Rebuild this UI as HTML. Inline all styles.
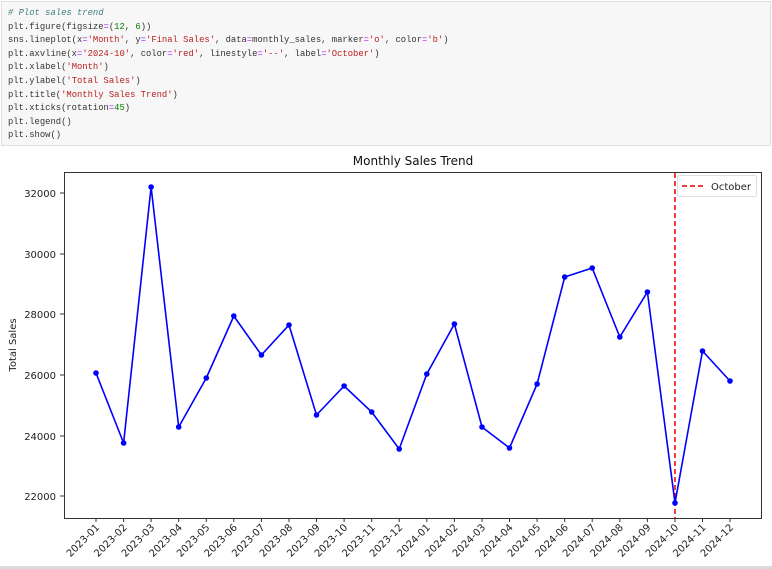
<!DOCTYPE html>
<html><head><meta charset="utf-8"><style>
html,body{margin:0;padding:0;background:#fff;width:772px;height:569px;overflow:hidden}
.code{position:absolute;left:1px;top:1px;width:768px;height:143px;background:#f7f7f7;border:1px solid #e0e0e0;}
.code pre{margin:0;position:absolute;left:6px;top:5px;font-family:"Liberation Mono",monospace;font-size:8.85px;line-height:13.6px;color:#333}
.c{color:#408080;font-style:italic}.s{color:#ba2121}.n{color:#008000}.k{color:#1a5fb4}.o{color:#aa22ff}
.bar{position:absolute;left:0;top:566px;width:772px;height:3px;background:#d8dcdf}
</style></head><body>
<div class="code"><pre><span class="c"># Plot sales trend</span>
plt.figure(figsize<span class="o">=</span>(<span class="n">12</span>, <span class="n">6</span>))
sns.lineplot(x<span class="o">=</span><span class="s">'Month'</span>, y<span class="o">=</span><span class="s">'Final Sales'</span>, data<span class="o">=</span>monthly_sales, marker<span class="o">=</span><span class="s">'o'</span>, color<span class="o">=</span><span class="s">'b'</span>)
plt.axvline(x<span class="o">=</span><span class="s">'2024-10'</span>, color<span class="o">=</span><span class="s">'red'</span>, linestyle<span class="o">=</span><span class="s">'--'</span>, label<span class="o">=</span><span class="s">'October'</span>)
plt.xlabel(<span class="s">'Month'</span>)
plt.ylabel(<span class="s">'Total Sales'</span>)
plt.title(<span class="s">'Monthly Sales Trend'</span>)
plt.xticks(rotation<span class="o">=</span><span class="n">45</span>)
plt.legend()
plt.show()</pre></div>
<svg width="772" height="569" style="position:absolute;left:0;top:0" font-family="DejaVu Sans, Liberation Sans, sans-serif">
<text x="413" y="165" font-size="12" text-anchor="middle" fill="#111">Monthly Sales Trend</text>
<rect x="64.5" y="172.5" width="697" height="346" fill="none" stroke="#333" stroke-width="1"/>
<g font-size="10" fill="#222" text-anchor="end">
<line x1="60" y1="193" x2="64" y2="193" stroke="#333"/><text x="56" y="197">32000</text>
<line x1="60" y1="254" x2="64" y2="254" stroke="#333"/><text x="56" y="258">30000</text>
<line x1="60" y1="314" x2="64" y2="314" stroke="#333"/><text x="56" y="318">28000</text>
<line x1="60" y1="375" x2="64" y2="375" stroke="#333"/><text x="56" y="379">26000</text>
<line x1="60" y1="436" x2="64" y2="436" stroke="#333"/><text x="56" y="440">24000</text>
<line x1="60" y1="496" x2="64" y2="496" stroke="#333"/><text x="56" y="500">22000</text>
</g>
<text transform="translate(16,345) rotate(-90)" font-size="10" text-anchor="middle" fill="#222">Total Sales</text>
<line x1="675" y1="173" x2="675" y2="518" stroke="#e00" stroke-width="1.5" stroke-dasharray="5,3"/>
<polyline fill="none" stroke="#0000ff" stroke-width="1.6" points="96,373 123.6,443 151.1,187 178.7,427 206.3,378 233.8,316 261.4,355 289,325 316.5,415 344.1,386 371.7,412 399.2,449 426.8,374 454.4,324 482,427 509.5,448 537.1,384 564.7,277 592.2,268 619.8,337 647.4,292 675,503 702.5,351 730,381"/>
<g fill="#0000ff">
<circle cx="96" cy="373" r="2.8"/><circle cx="123.6" cy="443" r="2.8"/><circle cx="151.1" cy="187" r="2.8"/><circle cx="178.7" cy="427" r="2.8"/><circle cx="206.3" cy="378" r="2.8"/><circle cx="233.8" cy="316" r="2.8"/><circle cx="261.4" cy="355" r="2.8"/><circle cx="289" cy="325" r="2.8"/><circle cx="316.5" cy="415" r="2.8"/><circle cx="344.1" cy="386" r="2.8"/><circle cx="371.7" cy="412" r="2.8"/><circle cx="399.2" cy="449" r="2.8"/><circle cx="426.8" cy="374" r="2.8"/><circle cx="454.4" cy="324" r="2.8"/><circle cx="482" cy="427" r="2.8"/><circle cx="509.5" cy="448" r="2.8"/><circle cx="537.1" cy="384" r="2.8"/><circle cx="564.7" cy="277" r="2.8"/><circle cx="592.2" cy="268" r="2.8"/><circle cx="619.8" cy="337" r="2.8"/><circle cx="647.4" cy="292" r="2.8"/><circle cx="675" cy="503" r="2.8"/><circle cx="702.5" cy="351" r="2.8"/><circle cx="730" cy="381" r="2.8"/>
</g>
<rect x="677.5" y="175.5" width="79" height="21" rx="2" fill="#fff" fill-opacity="0.85" stroke="#ddd"/>
<line x1="682" y1="186" x2="704" y2="186" stroke="#e00" stroke-width="1.5" stroke-dasharray="5,3"/>
<text x="711" y="190" font-size="10" fill="#222">October</text>
<g font-size="10" fill="#222" text-anchor="end" stroke="none">
<g id="t"></g>
</g>
<g stroke="#333">
<line x1="96" y1="518" x2="96" y2="522"/><line x1="123.6" y1="518" x2="123.6" y2="522"/><line x1="151.1" y1="518" x2="151.1" y2="522"/><line x1="178.7" y1="518" x2="178.7" y2="522"/><line x1="206.3" y1="518" x2="206.3" y2="522"/><line x1="233.8" y1="518" x2="233.8" y2="522"/><line x1="261.4" y1="518" x2="261.4" y2="522"/><line x1="289" y1="518" x2="289" y2="522"/><line x1="316.5" y1="518" x2="316.5" y2="522"/><line x1="344.1" y1="518" x2="344.1" y2="522"/><line x1="371.7" y1="518" x2="371.7" y2="522"/><line x1="399.2" y1="518" x2="399.2" y2="522"/><line x1="426.8" y1="518" x2="426.8" y2="522"/><line x1="454.4" y1="518" x2="454.4" y2="522"/><line x1="482" y1="518" x2="482" y2="522"/><line x1="509.5" y1="518" x2="509.5" y2="522"/><line x1="537.1" y1="518" x2="537.1" y2="522"/><line x1="564.7" y1="518" x2="564.7" y2="522"/><line x1="592.2" y1="518" x2="592.2" y2="522"/><line x1="619.8" y1="518" x2="619.8" y2="522"/><line x1="647.4" y1="518" x2="647.4" y2="522"/><line x1="675" y1="518" x2="675" y2="522"/><line x1="702.5" y1="518" x2="702.5" y2="522"/><line x1="730" y1="518" x2="730" y2="522"/>
</g>
<g font-size="10" fill="#222" text-anchor="end">
<text transform="translate(100,528) rotate(-45)">2023-01</text>
<text transform="translate(127.6,528) rotate(-45)">2023-02</text>
<text transform="translate(155.1,528) rotate(-45)">2023-03</text>
<text transform="translate(182.7,528) rotate(-45)">2023-04</text>
<text transform="translate(210.3,528) rotate(-45)">2023-05</text>
<text transform="translate(237.8,528) rotate(-45)">2023-06</text>
<text transform="translate(265.4,528) rotate(-45)">2023-07</text>
<text transform="translate(293,528) rotate(-45)">2023-08</text>
<text transform="translate(320.5,528) rotate(-45)">2023-09</text>
<text transform="translate(348.1,528) rotate(-45)">2023-10</text>
<text transform="translate(375.7,528) rotate(-45)">2023-11</text>
<text transform="translate(403.2,528) rotate(-45)">2023-12</text>
<text transform="translate(430.8,528) rotate(-45)">2024-01</text>
<text transform="translate(458.4,528) rotate(-45)">2024-02</text>
<text transform="translate(486,528) rotate(-45)">2024-03</text>
<text transform="translate(513.5,528) rotate(-45)">2024-04</text>
<text transform="translate(541.1,528) rotate(-45)">2024-05</text>
<text transform="translate(568.7,528) rotate(-45)">2024-06</text>
<text transform="translate(596.2,528) rotate(-45)">2024-07</text>
<text transform="translate(623.8,528) rotate(-45)">2024-08</text>
<text transform="translate(651.4,528) rotate(-45)">2024-09</text>
<text transform="translate(679,528) rotate(-45)">2024-10</text>
<text transform="translate(706.5,528) rotate(-45)">2024-11</text>
<text transform="translate(734,528) rotate(-45)">2024-12</text>
</g>
</svg>
<div class="bar"></div>
</body></html>
